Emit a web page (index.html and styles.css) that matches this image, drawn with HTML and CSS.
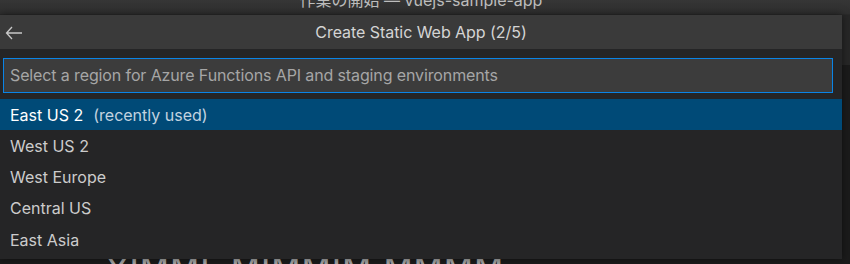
FILE: index.html
```html
<!DOCTYPE html>
<html lang="ja">
<head>
<meta charset="utf-8">
<link rel="stylesheet" href="styles.css">
</head>
<body>
<div class="window">
  <div class="titlebar"><span class="wintitle">作業の開始 — vuejs-sample-app</span></div>
  <div class="workbench">
    <div class="tabstrip"></div>
    <div class="editor"><span class="bigtext">XJMML MIMMIM MMMM</span></div>
  </div>
  <div class="quickpick">
    <div class="qp-header">
      <svg class="back" width="18" height="14" viewBox="0 0 18 14"><path d="M7 1 L1.5 7 L7 13 M1.5 7 H17" fill="none" stroke="#c8c8c8" stroke-width="1.3"/></svg>
      <span class="qp-title">Create Static Web App (2/5)</span>
    </div>
    <div class="qp-inputwrap">
      <div class="qp-input">Select a region for Azure Functions API and staging environments</div>
    </div>
    <ul class="qp-list">
      <li class="qp-item selected"><span class="label">East US 2</span><span class="desc">(recently used)</span></li>
      <li class="qp-item"><span class="label">West US 2</span></li>
      <li class="qp-item"><span class="label">West Europe</span></li>
      <li class="qp-item"><span class="label">Central US</span></li>
      <li class="qp-item"><span class="label">East Asia</span></li>
    </ul>
  </div>
</div>
</body>
</html>
```

FILE: styles.css
```css
html, body {
  margin: 0;
  padding: 0;
  background: #1e1e1e;
}
body {
  font-family: Inter, "Noto Sans CJK JP", sans-serif;
  width: 850px;
  height: 264px;
  overflow: hidden;
}
.window {
  position: relative;
  width: 850px;
  height: 264px;
  display: flex;
  flex-direction: column;
}
.titlebar {
  height: 15px;
  background: linear-gradient(#363636, #2f2f2f);
  display: flex;
  justify-content: center;
  overflow: hidden;
  border-bottom: 1px solid #2a2a2a;
  box-sizing: border-box;
}
.wintitle {
  color: #bdbdbd;
  font-size: 16px;
  line-height: 16px;
  margin-top: -8px;
  margin-left: -8px;
  white-space: nowrap;
}
.workbench {
  flex: 1;
  display: flex;
  flex-direction: column;
  background: #1b1b1b;
}
.tabstrip {
  height: 50px;
  background: #272727;
}
.editor {
  flex: 1;
  position: relative;
  overflow: hidden;
}
.bigtext {
  position: absolute;
  left: 105px;
  top: 186px;
  font-family: "DejaVu Sans", sans-serif;
  font-size: 35px;
  color: #a8a8a8;
  white-space: nowrap;
}
.quickpick {
  position: absolute;
  left: 0;
  top: 15px;
  width: 842px;
  height: 244px;
  background: #252526;
  box-shadow: 0 0 8px rgba(0,0,0,0.5);
  display: flex;
  flex-direction: column;
}
.qp-header {
  height: 34px;
  background: #3a3a3a;
  display: flex;
  align-items: center;
  justify-content: center;
  position: relative;
}
.back {
  position: absolute;
  left: 5px;
  top: 11px;
}
.qp-title {
  color: #d4d4d4;
  font-size: 16px;
  letter-spacing: -0.05px;
}
.qp-inputwrap {
  padding: 9px 9px 0 3px;
}
.qp-input {
  height: 35px;
  box-sizing: border-box;
  border: 1px solid #0a84e6;
  background: #3c3c3c;
  color: #a6a6a6;
  font-size: 16px;
  letter-spacing: -0.12px;
  line-height: 33px;
  padding-left: 6px;
  white-space: nowrap;
}
.qp-list {
  list-style: none;
  margin: 6px 0 0 0;
  padding: 0;
}
.qp-item {
  height: 31.25px;
  display: flex;
  align-items: center;
  padding-left: 10px;
  color: #cccccc;
  font-size: 16px;
  white-space: nowrap;
}
.qp-item.selected {
  background: #004a77;
  color: #ffffff;
}
.desc {
  margin-left: 10px;
  color: #c2d3e0;
}
```
